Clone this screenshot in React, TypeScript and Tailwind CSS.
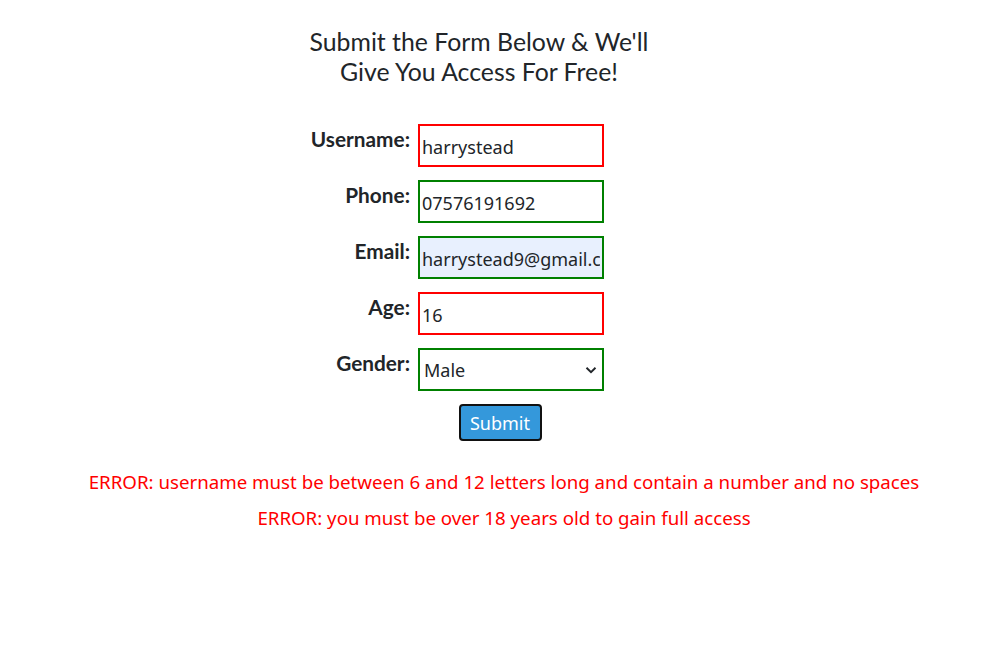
export default function App() {
  const rows = [
    { label: 'Username:', value: 'harrystead', ok: false },
    { label: 'Phone:', value: '07576191692', ok: true },
    { label: 'Email:', value: 'harrystead9@gmail.com', ok: true, autofill: true },
    { label: 'Age:', value: '16', ok: false },
  ]

  return (
    <div className="w-[1000px] h-[655px] bg-white text-[#212529] font-['Noto_Sans',sans-serif]">
      {/* heading */}
      <div className="pt-[27px] pr-[42px] text-center font-['Lato',sans-serif] text-[24.8px] leading-[30px]">
        <h1>Submit the Form Below &amp; We'll</h1>
        <h1>Give You Access For Free!</h1>
      </div>

      {/* form */}
      <form className="mt-[37px] ml-[300px] w-[304px] flex flex-col gap-[13px]">
        {rows.map((r) => (
          <div key={r.label} className="flex gap-[8px]">
            <label className="w-[110px] pt-[3px] text-right font-['Lato',sans-serif] font-bold text-[20.8px] leading-[24px]">
              {r.label}
            </label>
            <input
              readOnly
              value={r.value}
              className={`w-[186px] h-[43px] px-[2px] pt-[2px] border-2 text-[18px] outline-none ${
                r.ok ? 'border-[#008000]' : 'border-[#ff0000]'
              } ${r.autofill ? 'bg-[#e8f0fe]' : 'bg-white'}`}
            />
          </div>
        ))}
        <div className="flex gap-[8px]">
          <label className="w-[110px] pt-[3px] text-right font-['Lato',sans-serif] font-bold text-[20.8px] leading-[24px]">
            Gender:
          </label>
          <div className="relative w-[186px] h-[43px] border-2 border-[#008000] bg-white flex items-center">
            <span className="pl-[4px] pt-[2px] text-[18px]">Male</span>
            <svg
              className="absolute right-[5px] top-[14px]"
              width="12"
              height="12"
              viewBox="0 0 16 16"
              fill="none"
              stroke="#212529"
              strokeWidth="2.5"
            >
              <path d="M2 5l6 6 6-6" />
            </svg>
          </div>
        </div>
      </form>

      <div className="mt-[13px] flex justify-center">
        <button className="w-[83px] h-[37px] rounded-[4px] border-2 border-[#111] bg-[#3498db] text-white text-[18px] leading-none">
          Submit
        </button>
      </div>

      {/* errors */}
      <div className="mt-[23px] pl-[8px] text-center text-[#ff0000] text-[18.7px] leading-[36px]">
        <p>ERROR: username must be between 6 and 12 letters long and contain a number and no spaces</p>
        <p>ERROR: you must be over 18 years old to gain full access</p>
      </div>
    </div>
  )
}
